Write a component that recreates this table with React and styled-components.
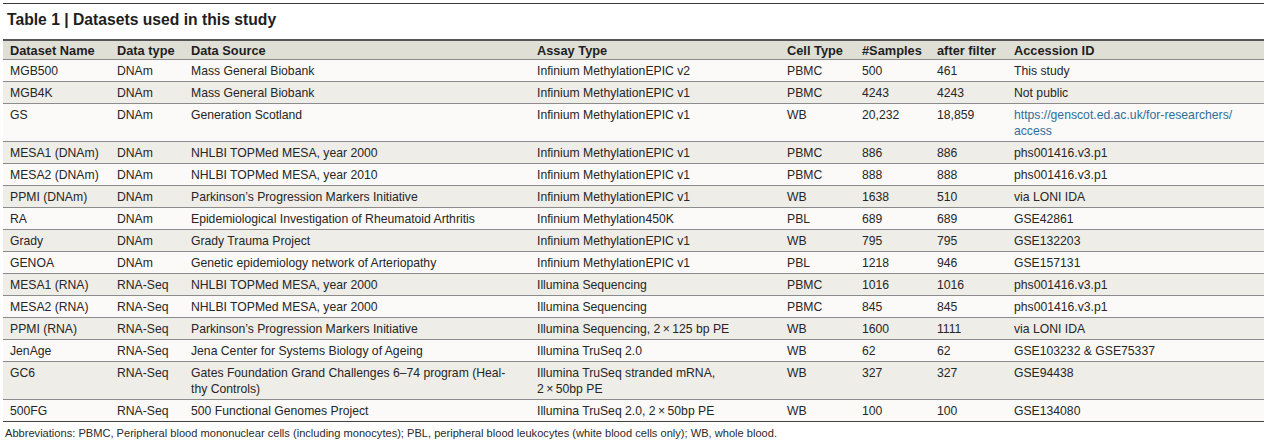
import React from 'react';
import { styled, createGlobalStyle } from 'styled-components';

const GlobalStyle = createGlobalStyle`
  body {
    margin: 0;
    background: #fff;
    font-family: 'Liberation Sans', Arial, sans-serif;
    color: #222;
  }
`;

const columns = [
  { label: 'Dataset Name', width: 107 },
  { label: 'Data type', width: 74 },
  { label: 'Data Source', width: 346 },
  { label: 'Assay Type', width: 250 },
  { label: 'Cell Type', width: 75 },
  { label: '#Samples', width: 75 },
  { label: 'after filter', width: 77 },
  { label: 'Accession ID', width: 257 },
];

const rows = [
  ['MGB500', 'DNAm', 'Mass General Biobank', 'Infinium MethylationEPIC v2', 'PBMC', '500', '461', 'This study'],
  ['MGB4K', 'DNAm', 'Mass General Biobank', 'Infinium MethylationEPIC v1', 'PBMC', '4243', '4243', 'Not public'],
  ['GS', 'DNAm', 'Generation Scotland', 'Infinium MethylationEPIC v1', 'WB', '20,232', '18,859', { href: ['https://genscot.ed.ac.uk/for-researchers/', 'access'] }],
  ['MESA1 (DNAm)', 'DNAm', 'NHLBI TOPMed MESA, year 2000', 'Infinium MethylationEPIC v1', 'PBMC', '886', '886', 'phs001416.v3.p1'],
  ['MESA2 (DNAm)', 'DNAm', 'NHLBI TOPMed MESA, year 2010', 'Infinium MethylationEPIC v1', 'PBMC', '888', '888', 'phs001416.v3.p1'],
  ['PPMI (DNAm)', 'DNAm', 'Parkinson’s Progression Markers Initiative', 'Infinium MethylationEPIC v1', 'WB', '1638', '510', 'via LONI IDA'],
  ['RA', 'DNAm', 'Epidemiological Investigation of Rheumatoid Arthritis', 'Infinium Methylation450K', 'PBL', '689', '689', 'GSE42861'],
  ['Grady', 'DNAm', 'Grady Trauma Project', 'Infinium MethylationEPIC v1', 'WB', '795', '795', 'GSE132203'],
  ['GENOA', 'DNAm', 'Genetic epidemiology network of Arteriopathy', 'Infinium MethylationEPIC v1', 'PBL', '1218', '946', 'GSE157131'],
  ['MESA1 (RNA)', 'RNA-Seq', 'NHLBI TOPMed MESA, year 2000', 'Illumina Sequencing', 'PBMC', '1016', '1016', 'phs001416.v3.p1'],
  ['MESA2 (RNA)', 'RNA-Seq', 'NHLBI TOPMed MESA, year 2000', 'Illumina Sequencing', 'PBMC', '845', '845', 'phs001416.v3.p1'],
  ['PPMI (RNA)', 'RNA-Seq', 'Parkinson’s Progression Markers Initiative', 'Illumina Sequencing, 2\u2009×\u2009125 bp PE', 'WB', '1600', '1111', 'via LONI IDA'],
  ['JenAge', 'RNA-Seq', 'Jena Center for Systems Biology of Ageing', 'Illumina TruSeq 2.0', 'WB', '62', '62', 'GSE103232 & GSE75337'],
  ['GC6', 'RNA-Seq', ['Gates Foundation Grand Challenges 6–74 program (Heal-', 'thy Controls)'], ['Illumina TruSeq stranded mRNA,', '2\u2009×\u200950bp PE'], 'WB', '327', '327', 'GSE94438'],
  ['500FG', 'RNA-Seq', '500 Functional Genomes Project', 'Illumina TruSeq 2.0, 2\u2009×\u200950bp PE', 'WB', '100', '100', 'GSE134080'],
];

const renderCell = (value) => {
  if (typeof value === 'string') return value;
  if (Array.isArray(value)) {
    return value.map((line, i) => (
      <React.Fragment key={i}>
        {i > 0 && <br />}
        {line}
      </React.Fragment>
    ));
  }
  return (
    <Link href='#'>
      {value.href[0]}
      <br />
      {value.href[1]}
    </Link>
  );
};

const App = () => {
  return (
    <Page>
      <GlobalStyle />
      <Title>Table 1 | Datasets used in this study</Title>
      <Table>
        <colgroup>
          {columns.map((c) => (
            <col key={c.label} style={{ width: c.width }} />
          ))}
        </colgroup>
        <thead>
          <tr>
            {columns.map((c) => (
              <Th key={c.label}>{c.label}</Th>
            ))}
          </tr>
        </thead>
        <tbody>
          {rows.map((row, r) => (
            <Row key={r} $shaded={r % 2 === 1}>
              {row.map((cell, c) => (
                <Td key={c}>{renderCell(cell)}</Td>
              ))}
            </Row>
          ))}
        </tbody>
      </Table>
      <Note>
        Abbreviations: PBMC, Peripheral blood mononuclear cells (including monocytes); PBL, peripheral blood leukocytes (white blood cells only); WB, whole blood.
      </Note>
    </Page>
  );
};

export default App;

const Page = styled.div`
  width: 1261px;
  margin: 3px 0 0 3px;
  border-top: 1.5px solid #3a3a3a;
`;

const Title = styled.h1`
  margin: 0;
  padding: 7px 0 0 4px;
  height: 28px;
  font-size: 15.7px;
  line-height: 18px;
  font-weight: 700;
  color: #1e1e1e;
`;

const Table = styled.table`
  width: 1261px;
  table-layout: fixed;
  border-collapse: collapse;
  border-bottom: 1.5px solid #444;
`;

const Th = styled.th`
  text-align: left;
  font-size: 12.8px;
  font-weight: 700;
  line-height: 15px;
  padding: 2px 7px 1px;
  background: #e0dfd6;
  border-top: 2px solid #555;
  color: #1e1e1e;
  white-space: nowrap;
`;

const Row = styled.tr`
  background: ${(p) => (p.$shaded ? '#efede8' : '#fbfaf8')};
  border-top: 1px solid #8c8c8c;
`;

const Td = styled.td`
  vertical-align: top;
  font-size: 12.2px;
  line-height: 16px;
  padding: 3px 7px 2px;
  color: #262626;
  white-space: nowrap;
`;

const Link = styled.a`
  color: #2f6f9a;
  text-decoration: none;
`;

const Note = styled.p`
  margin: 5px 0 0 2px;
  font-size: 11.1px;
  line-height: 13px;
  color: #2a2a2a;
`;
